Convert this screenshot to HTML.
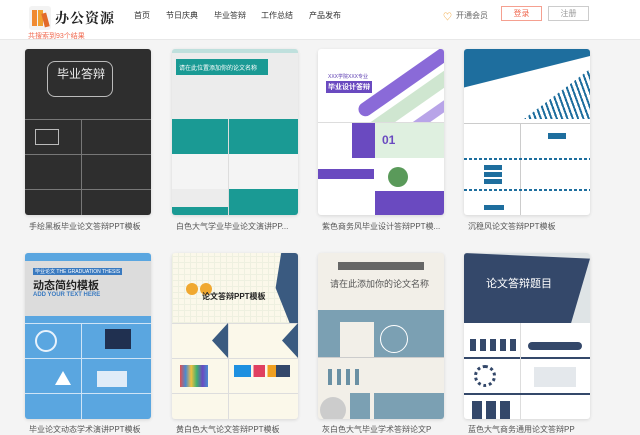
<!DOCTYPE html>
<html><head><meta charset="utf-8"><style>
*{margin:0;padding:0;box-sizing:border-box}
body{width:640px;height:432px;overflow:hidden;background:#f4f4f4;font-family:"Liberation Sans","Noto Sans CJK SC",sans-serif;position:relative}
.hd{position:absolute;left:0;top:0;width:640px;height:40px;background:#fff;border-bottom:1px solid #e8e8e8}
.ab{position:absolute;white-space:nowrap}
.nav{font-size:8px;color:#333;top:10px}
.card{position:absolute;width:126px;height:166px;border-radius:3px;overflow:hidden;box-shadow:0 1px 3px rgba(0,0,0,.12)}
.cap{position:absolute;font-size:8px;color:#555;white-space:nowrap}
.r{position:absolute}
</style></head><body>
<div class="hd">
 <div class="ab" style="left:29px;top:6px;width:22px;height:24px;background:#f3f3f3;border-radius:3px">
  <div class="r" style="left:3px;top:4px;width:5px;height:16px;background:#f08a30"></div>
  <div class="r" style="left:9px;top:4px;width:5px;height:16px;background:#f0a030"></div>
  <div class="r" style="left:14px;top:7px;width:5px;height:14px;background:#e26a2a;transform:rotate(-15deg)"></div>
 </div>
 <div class="ab" style="left:55px;top:8px;font-size:14px;font-weight:bold;color:#222;font-family:'Noto Serif CJK SC',serif;letter-spacing:1px">办公资源</div>
 <div class="ab nav" style="left:134px">首页</div>
 <div class="ab nav" style="left:166px">节日庆典</div>
 <div class="ab nav" style="left:214px">毕业答辩</div>
 <div class="ab nav" style="left:261px">工作总结</div>
 <div class="ab nav" style="left:309px">产品发布</div>
 <div class="ab" style="left:443px;top:10px;font-size:9px;color:#f0a030">♡</div>
 <div class="ab nav" style="left:456px;color:#666">开通会员</div>
 <div class="ab" style="left:501px;top:6px;width:41px;height:15px;border:1px solid #f5a090;color:#f06a50;font-size:8px;text-align:center;line-height:13px">登录</div>
 <div class="ab" style="left:548px;top:6px;width:41px;height:15px;border:1px solid #ccc;color:#999;font-size:8px;text-align:center;line-height:13px">注册</div>
</div>
<div class="ab" style="left:28px;top:31px;font-size:7px;color:#f06a50">共搜索到93个结果</div>

<!-- row 1 -->
<div class="card" style="left:25px;top:49px;background:#2e2e2e">
 <div class="r" style="left:22px;top:12px;width:66px;height:36px;border:1px solid #bbb;border-radius:8px"></div>
 <div class="r" style="left:32px;top:16px;color:#eee;font-size:12px">毕业答辩</div>
 <div class="r" style="left:0;top:70px;width:126px;height:1px;background:#777"></div>
 <div class="r" style="left:56px;top:70px;width:1px;height:96px;background:#777"></div>
 <div class="r" style="left:0;top:105px;width:126px;height:1px;background:#777"></div>
 <div class="r" style="left:0;top:140px;width:126px;height:1px;background:#777"></div>
 <div class="r" style="left:10px;top:80px;width:24px;height:16px;border:1px solid #bbb"></div>
</div>
<div class="card" style="left:172px;top:49px;background:#ececec">
 <div class="r" style="left:0;top:0;width:126px;height:4px;background:#bfe0dd"></div>
 <div class="r" style="left:4px;top:10px;width:92px;height:16px;background:#1a9a94"></div>
 <div class="r" style="left:7px;top:14px;color:#fff;font-size:6px">请在此位置添加你的论文名称</div>
 <div class="r" style="left:0;top:70px;width:126px;height:35px;background:#1a9a94"></div>
 <div class="r" style="left:0;top:105px;width:126px;height:35px;background:#f4f4f4"></div>
 <div class="r" style="left:56px;top:140px;width:70px;height:26px;background:#1a9a94"></div>
 <div class="r" style="left:0;top:158px;width:56px;height:8px;background:#1a9a94"></div>
 <div class="r" style="left:56px;top:70px;width:1px;height:96px;background:#ddd"></div>
</div>
<div class="card" style="left:318px;top:49px;background:#fff">
 <div class="r" style="left:30px;top:20px;width:130px;height:14px;background:#8a6ad8;transform:rotate(-35deg);border-radius:7px"></div>
 <div class="r" style="left:30px;top:45px;width:130px;height:14px;background:#cfe6d0;transform:rotate(-35deg);border-radius:7px"></div>
 <div class="r" style="left:50px;top:60px;width:130px;height:10px;background:#b8a4e8;transform:rotate(-35deg);border-radius:5px"></div>
 <div class="r" style="left:10px;top:24px;color:#5a3ab0;font-size:5px">XXX学院XXX专业</div>
 <div class="r" style="left:8px;top:32px;color:#fff;background:#6a4ac0;font-size:7px;font-weight:bold;padding:1px 2px">毕业设计答辩</div>
 <div class="r" style="left:0;top:73px;width:126px;height:1px;background:#ddd"></div>
 <div class="r" style="left:34px;top:74px;width:23px;height:35px;background:#6a4ac0"></div>
 <div class="r" style="left:57px;top:74px;width:69px;height:35px;background:#dff0e0"></div>
 <div class="r" style="left:64px;top:84px;color:#6a4ac0;font-size:12px;font-weight:bold">01</div>
 <div class="r" style="left:0;top:120px;width:56px;height:10px;background:#6a4ac0"></div>
 <div class="r" style="left:57px;top:142px;width:69px;height:24px;background:#6a4ac0"></div>
 <div class="r" style="left:70px;top:118px;width:20px;height:20px;border-radius:50%;background:#5a9a5a"></div>
</div>
<div class="card" style="left:464px;top:49px;background:#fff">
 <div class="r" style="left:0;top:0;width:126px;height:70px;background:#1e6e9e;clip-path:polygon(0 0,100% 0,100% 10%,0 55%)"></div>
 <div class="r" style="left:60px;top:20px;width:66px;height:50px;background:repeating-linear-gradient(70deg,#1e6e9e 0 2px,#fff 2px 5px);clip-path:polygon(100% 0,100% 100%,0 100%)"></div>
 <div class="r" style="left:0;top:74px;width:126px;height:1px;background:#ccc"></div>
 <div class="r" style="left:56px;top:74px;width:1px;height:92px;background:#ccc"></div>
 <div class="r" style="left:0;top:109px;width:126px;height:2px;background:repeating-linear-gradient(90deg,#1e6e9e 0 3px,#fff 3px 5px)"></div>
 <div class="r" style="left:0;top:140px;width:126px;height:2px;background:repeating-linear-gradient(90deg,#1e6e9e 0 3px,#fff 3px 5px)"></div>
 <div class="r" style="left:20px;top:115px;width:18px;height:20px;background:repeating-linear-gradient(0deg,#1e6e9e 0 5px,#fff 5px 7px)"></div>
 <div class="r" style="left:20px;top:156px;width:20px;height:5px;background:#1e6e9e"></div>
 <div class="r" style="left:84px;top:84px;width:18px;height:6px;background:#1e6e9e"></div>
</div>
<div class="cap" style="left:29px;top:221px">手绘黑板毕业论文答辩PPT模板</div>
<div class="cap" style="left:176px;top:221px">白色大气学业毕业论文演讲PP...</div>
<div class="cap" style="left:322px;top:221px">紫色商务风毕业设计答辩PPT模...</div>
<div class="cap" style="left:468px;top:221px">沉稳风论文答辩PPT模板</div>

<!-- row 2 -->
<div class="card" style="left:25px;top:253px;background:#5aa6e0">
 <div class="r" style="left:0;top:8px;width:126px;height:55px;background:#dcdcdc"></div>
 <div class="r" style="left:8px;top:15px;font-size:5px;color:#fff;background:#3a7ac0;padding:0 2px">毕业论文 THE GRADUATION THESIS</div>
 <div class="r" style="left:8px;top:24px;font-size:11px;font-weight:bold;color:#222">动态简约模板</div>
 <div class="r" style="left:8px;top:39px;font-size:6px;font-weight:bold;color:#3a7ac0">ADD YOUR TEXT HERE</div>
 <div class="r" style="left:0;top:70px;width:126px;height:1px;background:#cfe4f6"></div>
 <div class="r" style="left:0;top:105px;width:126px;height:1px;background:#cfe4f6"></div>
 <div class="r" style="left:0;top:140px;width:126px;height:1px;background:#cfe4f6"></div>
 <div class="r" style="left:56px;top:70px;width:1px;height:96px;background:#cfe4f6"></div>
 <div class="r" style="left:10px;top:77px;width:22px;height:22px;border-radius:50%;border:2px solid #e8f2fc"></div>
 <div class="r" style="left:80px;top:76px;width:26px;height:20px;background:#203050"></div>
 <div class="r" style="left:72px;top:118px;width:30px;height:16px;background:#e0ecf8"></div>
 <div class="r" style="left:30px;top:118px;width:0;height:0;border-left:8px solid transparent;border-right:8px solid transparent;border-bottom:14px solid #fff"></div>
</div>
<div class="card" style="left:172px;top:253px;background:#fbf8ea">
 <div class="r" style="left:0;top:0;width:126px;height:70px;background:repeating-linear-gradient(0deg,#eef0e0 0 1px,transparent 1px 6px),repeating-linear-gradient(90deg,#eef0e0 0 1px,transparent 1px 6px)"></div>
 <div class="r" style="left:98px;top:0;width:28px;height:70px;background:#3a5a80;clip-path:polygon(40% 0,100% 0,100% 100%,70% 100%,20% 50%)"></div>
 <div class="r" style="left:14px;top:30px;width:12px;height:12px;border-radius:50%;background:#f0a830"></div>
 <div class="r" style="left:28px;top:30px;width:12px;height:12px;border-radius:50%;background:#f0a830"></div>
 <div class="r" style="left:30px;top:38px;font-size:8px;font-weight:bold;color:#222">论文答辩PPT模板</div>
 <div class="r" style="left:0;top:70px;width:126px;height:1px;background:#ddd"></div>
 <div class="r" style="left:0;top:105px;width:126px;height:1px;background:#ddd"></div>
 <div class="r" style="left:0;top:140px;width:126px;height:1px;background:#ddd"></div>
 <div class="r" style="left:56px;top:70px;width:1px;height:96px;background:#ddd"></div>
 <div class="r" style="left:8px;top:112px;width:28px;height:22px;background:linear-gradient(90deg,#e05050,#4a8ad0,#f0c040,#40b070,#6a4ac0,#4a8ad0)"></div>
 <div class="r" style="left:62px;top:112px;width:56px;height:12px;background:linear-gradient(90deg,#1e90e0 0 30%,transparent 30% 35%,#e04060 35% 55%,transparent 55% 60%,#f0a020 60% 75%,#34486a 75%)"></div>
 <div class="r" style="left:40px;top:70px;width:16px;height:35px;background:#3a5a80;clip-path:polygon(100% 0,100% 100%,0 50%)"></div>
 <div class="r" style="left:110px;top:70px;width:16px;height:35px;background:#3a5a80;clip-path:polygon(100% 0,100% 100%,0 50%)"></div>
</div>
<div class="card" style="left:318px;top:253px;background:#f2efe8">
 <div class="r" style="left:20px;top:9px;width:86px;height:8px;background:#666"></div>
 <div class="r" style="left:12px;top:24px;font-size:9px;color:#555">请在此添加你的论文名称</div>
 <div class="r" style="left:0;top:57px;width:126px;height:12px;background:#7ba0b3"></div>
 <div class="r" style="left:0;top:69px;width:22px;height:35px;background:#7ba0b3"></div>
 <div class="r" style="left:56px;top:69px;width:70px;height:35px;background:#7ba0b3"></div>
 <div class="r" style="left:62px;top:72px;width:28px;height:28px;border-radius:50%;border:1px solid #fff"></div>
 <div class="r" style="left:0;top:104px;width:126px;height:1px;background:#ccc"></div>
 <div class="r" style="left:32px;top:140px;width:20px;height:26px;background:#7ba0b3"></div>
 <div class="r" style="left:56px;top:140px;width:70px;height:26px;background:#7ba0b3"></div>
 <div class="r" style="left:2px;top:144px;width:26px;height:26px;border-radius:50%;background:#ccc"></div>
 <div class="r" style="left:10px;top:116px;width:36px;height:16px;background:repeating-linear-gradient(90deg,#6a90a4 0 4px,transparent 4px 9px)"></div>
</div>
<div class="card" style="left:464px;top:253px;background:#fff">
 <div class="r" style="left:0;top:0;width:126px;height:70px;background:#dfe4e6"></div>
 <div class="r" style="left:0;top:0;width:126px;height:70px;background:#34486a;clip-path:polygon(0 0,100% 8%,85% 100%,0 100%)"></div>
 <div class="r" style="left:22px;top:22px;font-size:11px;color:#fff">论文答辩题目</div>
 <div class="r" style="left:6px;top:86px;width:48px;height:12px;background:repeating-linear-gradient(90deg,#34486a 0 6px,#fff 6px 10px)"></div>
 <div class="r" style="left:64px;top:89px;width:54px;height:8px;border-radius:4px;background:#34486a"></div>
 <div class="r" style="left:0;top:104px;width:126px;height:2px;background:#34486a"></div>
 <div class="r" style="left:56px;top:70px;width:1px;height:96px;background:#ddd"></div>
 <div class="r" style="left:10px;top:112px;width:22px;height:22px;border-radius:50%;border:3px dotted #34486a"></div>
 <div class="r" style="left:70px;top:114px;width:42px;height:20px;background:#e4e8ec"></div>
 <div class="r" style="left:0;top:140px;width:126px;height:2px;background:#34486a"></div>
 <div class="r" style="left:8px;top:148px;width:40px;height:18px;background:repeating-linear-gradient(90deg,#34486a 0 10px,#fff 10px 14px)"></div>
</div>
<div class="cap" style="left:29px;top:424px">毕业论文动态学术演讲PPT模板</div>
<div class="cap" style="left:176px;top:424px">黄白色大气论文答辩PPT模板</div>
<div class="cap" style="left:322px;top:424px">灰白色大气毕业学术答辩论文P</div>
<div class="cap" style="left:468px;top:424px">蓝色大气商务通用论文答辩PP</div>
</body></html>
